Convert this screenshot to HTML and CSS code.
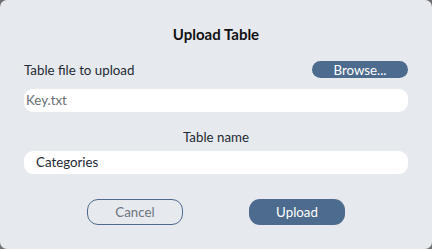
FILE: index.html
```html
<!DOCTYPE html>
<html>
	<head>
		<title>Upload Table</title>
		<link rel="stylesheet" href="styles.css">
	</head>
	<body>
		<div class="dialog">
			<h1 class="title">Upload Table</h1>
			<div class="file-row">
				<span class="label">Table file to upload</span>
				<button class="browse">Browse...</button>
			</div>
			<div class="field file-name">Key.txt</div>
			<div class="label center">Table name</div>
			<div class="field table-name">Categories</div>
			<div class="actions">
				<button class="cancel">Cancel</button>
				<button class="upload">Upload</button>
			</div>
		</div>
	</body>
</html>
```

FILE: styles.css
```css
body {
	margin: 0;
	background-color: #6f6f6f;
	overflow: hidden;
}

.dialog {
	width: 432px;
	height: 249px;
	box-sizing: border-box;
	padding: 25px 24px 0 24px;
	background-color: #e6e9ee;
	border-radius: 7px;
	font-family: Lato, sans-serif;
	font-size: 13.3px;
	color: #1d2733;
	display: flex;
	flex-direction: column;
}

.title {
	margin: 0;
	font-size: 15px;
	font-weight: 700;
	text-align: center;
	color: #111;
}

.file-row {
	margin-top: 18px;
	display: flex;
	align-items: center;
	justify-content: space-between;
}

.label {
	color: #222a33;
}

.center {
	margin-top: 17px;
	text-align: center;
}

button {
	font-family: Lato, sans-serif;
	font-size: 13.3px;
	cursor: pointer;
}

.browse {
	width: 96px;
	height: 17px;
	padding: 0;
	border: none;
	border-radius: 9px;
	background-color: #4c6b8e;
	color: #ffffff;
}

.field {
	height: 23px;
	line-height: 23px;
	background-color: #ffffff;
	border-radius: 9px;
	white-space: nowrap;
}

.file-name {
	margin-top: 11px;
	padding-left: 2px;
	color: #666d75;
}

.table-name {
	margin-top: 6px;
	padding-left: 12px;
	color: #1d2733;
}

.actions {
	margin-top: 25px;
	display: flex;
	justify-content: center;
	gap: 66px;
}

.cancel,
.upload {
	width: 96px;
	height: 26px;
	padding: 0;
	border-radius: 11px;
}

.cancel {
	border: 1px solid #4c6b8e;
	background-color: transparent;
	color: #6c7480;
}

.upload {
	border: none;
	background-color: #4c6b8e;
	color: #ffffff;
}
```
